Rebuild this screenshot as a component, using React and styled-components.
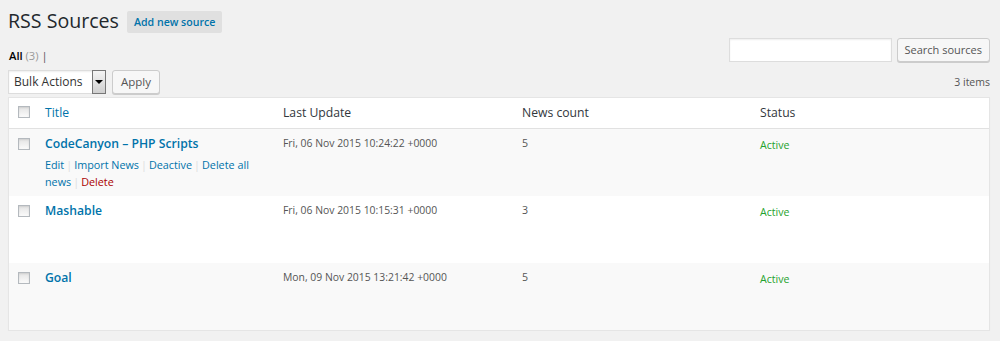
import React from "react";
import styled, { createGlobalStyle } from "styled-components";

const Global = createGlobalStyle`
  html, body { margin: 0; padding: 0; background: #f1f1f1; }
  body { font-family: "Open Sans", "Liberation Sans", sans-serif; color: #444; font-size: 12px; }
  * { box-sizing: border-box; }
`;

const Wrap = styled.div`
  padding: 0 10px 0 8px;
  width: 1000px;
`;

const HeadRow = styled.div`
  display: flex;
  align-items: center;
  height: 40px;
  padding-top: 2px;
`;

const H1 = styled.h1`
  margin: 0;
  font-size: 19.6px;
  font-weight: 400;
  color: #23282d;
  line-height: 26px;
`;

const AddBtn = styled.span`
  margin-left: 8px;
  background: #e0e0e0;
  color: #0073aa;
  font-weight: 600;
  font-size: 10.6px;
  padding: 0 7px;
  height: 22px;
  line-height: 22px;
  border-radius: 2px;
  margin-top: 1px;
`;

const TopArea = styled.div`
  display: flex;
  justify-content: space-between;
  align-items: flex-start;
`;

const Left = styled.div`
  display: flex;
  flex-direction: column;
`;

const Subsub = styled.div`
  margin-top: 7px;
  padding-left: 1px;
  font-size: 11.2px;
  line-height: 18px;
  color: #555;
  b { color: #000; font-weight: 600; }
  span.c { color: #999; }
`;

const Actions = styled.div`
  display: flex;
  gap: 6px;
  margin-top: 5px;
`;

const Select = styled.div`
  display: flex;
  width: 98px;
  height: 24px;
  background: #fff;
  border: 1px solid #ddd;
  box-shadow: inset 0 1px 2px rgba(0,0,0,0.07);
`;

const SelectText = styled.div`
  flex: 1;
  padding-left: 5px;
  line-height: 22px;
  font-size: 12px;
  color: #333;
`;

const SelectArrow = styled.div`
  width: 14px;
  background: linear-gradient(#f4f4f4, #cfcfcf);
  border: 1px solid #777;
  margin: -1px -1px -1px 0;
  display: flex;
  align-items: center;
  justify-content: center;
  &::after {
    content: "";
    border-left: 4px solid transparent;
    border-right: 4px solid transparent;
    border-top: 4px solid #000;
  }
`;

const Button = styled.div`
  height: 24px;
  line-height: 22px;
  padding: 0 ${p => p.$px || 8}px;
  background: #f7f7f7;
  border: 1px solid #ccc;
  border-radius: 3px;
  box-shadow: 0 1px 0 #ccc;
  color: #555;
  font-size: ${p => p.$fs || 11.5}px;
`;

const Right = styled.div`
  display: flex;
  flex-direction: column;
  align-items: flex-end;
  margin-top: -2px;
`;

const SearchRow = styled.div`
  display: flex;
  gap: 5px;
`;

const Input = styled.div`
  width: 163px;
  height: 24px;
  background: #fff;
  border: 1px solid #ddd;
  box-shadow: inset 0 1px 2px rgba(0,0,0,0.07);
`;

const Count = styled.div`
  margin-top: 11px;
  font-size: 10.5px;
  color: #555;
  line-height: 18px;
`;

const Table = styled.div`
  margin-top: 3px;
  width: 982px;
  background: #fff;
  border: 1px solid #e5e5e5;
  box-shadow: 0 1px 1px rgba(0,0,0,0.04);
`;

const Row = styled.div`
  display: grid;
  grid-template-columns: 36px 238px 239px 238px 1fr;
  height: ${p => p.$h}px;
  background: ${p => (p.$alt ? "#f9f9f9" : "#fff")};
  border-bottom: ${p => (p.$head ? "1px solid #e1e1e1" : "none")};
  padding-top: ${p => p.$pt}px;
`;

const CheckCell = styled.div`
  padding-left: 9px;
  padding-top: ${p => p.$pt || 0}px;
`;

const Check = styled.div`
  width: 12px;
  height: 12px;
  border: 1px solid #b4b9be;
  background: linear-gradient(#e4e4e4, #fbfbfb);
  box-shadow: inset 0 1px 2px rgba(0,0,0,0.1);
`;

const Cell = styled.div`
  font-size: ${p => p.$fs || 12}px;
  line-height: 19px;
  color: ${p => p.$c || "#555"};
  padding-top: ${p => p.$pt || 0}px;
`;

const HeadCell = styled.div`
  font-size: 12.2px;
  line-height: 19px;
  color: ${p => (p.$link ? "#0073aa" : "#32373c")};
`;

const TitleLink = styled.div`
  color: #0073aa;
  font-weight: 600;
  font-size: 12.2px;
  line-height: 19px;
`;

const RowActions = styled.div`
  margin-top: 3px;
  font-size: 10.8px;
  line-height: 17px;
  color: #0073aa;
  width: 212px;
  span.sep { color: #ddd; margin: 0 2px; }
  span.del { color: #a00; }
`;

const Status = styled.div`
  color: #1fa32e;
  font-size: 10.6px;
  line-height: 19px;
  padding-top: 2px;
`;

const rows = [
  { title: "CodeCanyon – PHP Scripts", date: "Fri, 06 Nov 2015 10:24:22 +0000", count: "5", actions: true },
  { title: "Mashable", date: "Fri, 06 Nov 2015 10:15:31 +0000", count: "3" },
  { title: "Goal", date: "Mon, 09 Nov 2015 13:21:42 +0000", count: "5" },
];

export default function App() {
  return (
    <Wrap>
      <Global />
      <HeadRow>
        <H1>RSS Sources</H1>
        <AddBtn>Add new source</AddBtn>
      </HeadRow>
      <TopArea>
        <Left>
          <Subsub>
            <b>All</b> <span className="c">(3)</span> |
          </Subsub>
          <Actions>
            <Select>
              <SelectText>Bulk Actions</SelectText>
              <SelectArrow />
            </Select>
            <Button>Apply</Button>
          </Actions>
        </Left>
        <Right>
          <SearchRow>
            <Input />
            <Button $px={7} $fs={11}>Search sources</Button>
          </SearchRow>
          <Count>3 items</Count>
        </Right>
      </TopArea>
      <Table>
        <Row $h={31} $head $pt={5}>
          <CheckCell $pt={3}><Check /></CheckCell>
          <HeadCell $link>Title</HeadCell>
          <HeadCell>Last Update</HeadCell>
          <HeadCell>News count</HeadCell>
          <HeadCell>Status</HeadCell>
        </Row>
        {rows.map((r, i) => (
          <Row key={i} $h={67} $alt={i % 2 === 0} $pt={5}>
            <CheckCell $pt={4}><Check /></CheckCell>
            <div>
              <TitleLink>{r.title}</TitleLink>
              {r.actions && (
                <RowActions>
                  Edit<span className="sep">|</span>Import News<span className="sep">|</span>Deactive<span className="sep">|</span>Delete all news<span className="sep">|</span><span className="del">Delete</span>
                </RowActions>
              )}
            </div>
            <Cell $fs={10.4}>{r.date}</Cell>
            <Cell $fs={10.6}>{r.count}</Cell>
            <Status>Active</Status>
          </Row>
        ))}
      </Table>
    </Wrap>
  );
}
